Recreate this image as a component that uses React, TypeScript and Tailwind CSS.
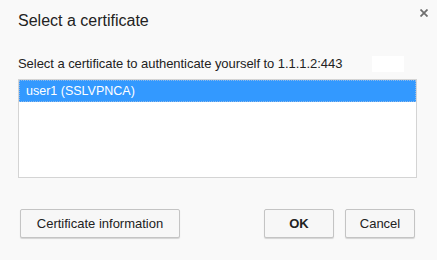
import React from 'react'

const font = { fontFamily: '"Liberation Sans", "Noto Sans CJK SC", sans-serif' }

export default function App() {
  return (
    <div
      className="relative w-[437px] h-[260px] bg-[#f9f9f9] text-[#222] pl-[18px] pr-[20px] flex flex-col"
      style={font}
    >
      <button className="absolute top-[9px] right-[9px] w-[8px] h-[8px] text-[#6f6f6f]" aria-label="Close">
        <svg viewBox="0 0 8 8" className="w-full h-full">
          <path d="M0.5 0.5 L7.5 7.5 M7.5 0.5 L0.5 7.5" stroke="currentColor" strokeWidth="1.8" />
        </svg>
      </button>

      <h1 className="pt-[11px] text-[16px] leading-[20px] text-[#222]">Select a certificate</h1>

      <div className="mt-[24px] flex items-center h-[17px]">
        <span className="text-[13px] leading-[17px] tracking-[-0.05px]">
          Select a certificate to authenticate yourself to 1.1.1.2:443
        </span>
        <span className="ml-auto mr-[13px] w-[32px] h-[16px] bg-white" />
      </div>

      <div className="mt-[7px] h-[99px] border border-[#d4d4d4] bg-white">
        <div className="h-[22px] bg-[#3399ff] border border-dotted border-[#8fb9e8] text-white text-[12.5px] leading-[20px] pl-[6px]">
          user1 (SSLVPNCA)
        </div>
      </div>

      <div className="mt-auto mb-[22px] flex items-center pl-[2px] pr-[2px]">
        <button className="h-[29px] w-[160px] rounded-[2px] border border-[#c4c4c4] bg-[#f7f7f7] shadow-[0_1px_1px_rgba(0,0,0,0.15)] text-[13px] text-[#222]">
          Certificate information
        </button>
        <button className="ml-auto h-[29px] w-[70px] rounded-[2px] border border-[#c4c4c4] bg-[#f7f7f7] shadow-[0_1px_1px_rgba(0,0,0,0.15)] text-[13px] font-bold text-[#222]">
          OK
        </button>
        <button className="ml-[11px] h-[29px] w-[70px] rounded-[2px] border border-[#c4c4c4] bg-[#f7f7f7] shadow-[0_1px_1px_rgba(0,0,0,0.15)] text-[13px] text-[#222]">
          Cancel
        </button>
      </div>
    </div>
  )
}
